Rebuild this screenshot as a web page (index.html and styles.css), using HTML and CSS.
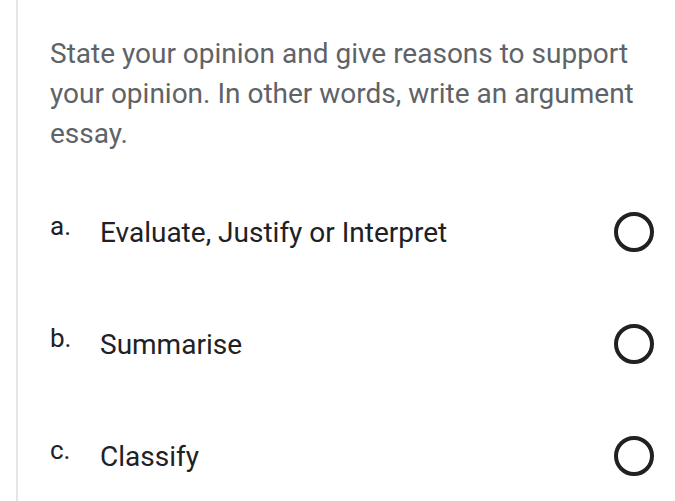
FILE: index.html
```html
<!DOCTYPE html>
<html lang="en">
<head>
    <meta charset="UTF-8">
    <meta name="viewport" content="width=device-width, initial-scale=1.0">
    <title>Question</title>
    <link rel="stylesheet" href="styles.css">
</head>
<body>
    <div class="card">
        <p class="question">State your opinion and give reasons to support your opinion. In other words, write an argument essay.</p>
        <div class="options">
            <div class="option">
                <span class="label">a.</span>
                <span class="text">Evaluate, Justify or Interpret</span>
                <span class="radio"></span>
            </div>
            <div class="option">
                <span class="label">b.</span>
                <span class="text">Summarise</span>
                <span class="radio"></span>
            </div>
            <div class="option">
                <span class="label">c.</span>
                <span class="text">Classify</span>
                <span class="radio"></span>
            </div>
        </div>
    </div>
</body>
</html>
```

FILE: styles.css
```css
body {
    margin: 0;
    font-family: Roboto, 'Liberation Sans', sans-serif;
    background-color: #fff;
    overflow: hidden;
}
.card {
    margin-left: 16px;
    border-left: 2px solid #e3e5e8;
    height: 501px;
    padding: 34px 20px 0 32px;
    box-sizing: border-box;
}
.question {
    margin: 0;
    font-size: 28px;
    line-height: 40px;
    color: #5f6368;
    max-width: 590px;
}
.options {
    margin-top: 22px;
}
.option {
    display: flex;
    align-items: center;
    height: 112px;
    color: #202124;
}
.label {
    width: 50px;
    font-size: 26px;
    position: relative;
    top: -6px;
}
.text {
    flex: 1;
    font-size: 28px;
}
.radio {
    width: 32px;
    height: 32px;
    border: 4px solid #202124;
    border-radius: 50%;
    margin-right: 1px;
}
```
